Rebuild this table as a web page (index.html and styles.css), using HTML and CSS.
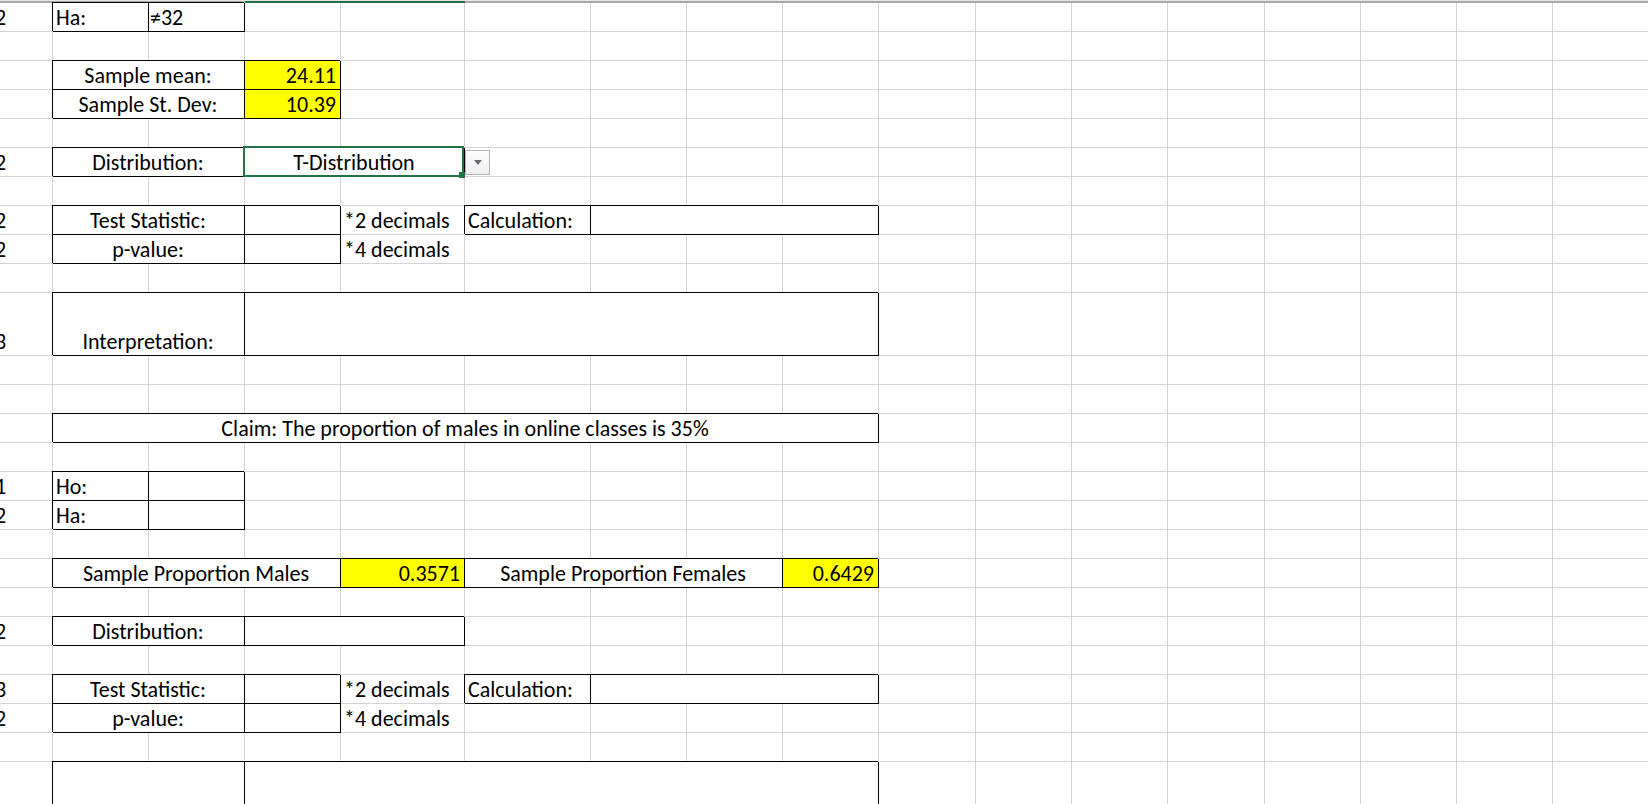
FILE: index.html
```html
<!DOCTYPE html>
<html>
<head>
<meta charset="utf-8">
<link rel="stylesheet" href="styles.css">
</head>
<body>
<div class="sheet">
  <div class="colhead"><div class="hd-sel"></div></div>

  <div class="row">
    <div class="cell ca">2</div>
    <div class="cell cb bd">Ha:</div>
    <div class="cell cc bd neq">≠32</div>
  </div>
  <div class="row"></div>
  <div class="row">
    <div class="cell s-bc bd center">Sample mean:</div>
    <div class="cell cd bd yel right">24.11</div>
  </div>
  <div class="row">
    <div class="cell s-bc bd center">Sample St. Dev:</div>
    <div class="cell cd bd yel right">10.39</div>
  </div>
  <div class="row"></div>
  <div class="row">
    <div class="cell ca">2</div>
    <div class="cell s-bc bd center">Distribution:</div>
    <div class="cell s-de bd center sel">T-Distribution</div>
    <div class="cell cf dd-cell"><span class="dd"><span class="arrow"></span></span></div>
  </div>
  <div class="row"></div>
  <div class="row">
    <div class="cell ca">2</div>
    <div class="cell s-bc bd center">Test Statistic:</div>
    <div class="cell cd bd"></div>
    <div class="cell ce">*2 decimals</div>
    <div class="cell cf bd">Calculation:</div>
    <div class="cell s-gi bd"></div>
  </div>
  <div class="row">
    <div class="cell ca">2</div>
    <div class="cell s-bc bd center">p-value:</div>
    <div class="cell cd bd"></div>
    <div class="cell ce">*4 decimals</div>
  </div>
  <div class="row"></div>
  <div class="row tall">
    <div class="cell ca">3</div>
    <div class="cell s-bc bd center">Interpretation:</div>
    <div class="cell s-di bd"></div>
  </div>
  <div class="row"></div>
  <div class="row"></div>
  <div class="row">
    <div class="cell s-bi bd center">Claim: The proportion of males in online classes is 35%</div>
  </div>
  <div class="row"></div>
  <div class="row">
    <div class="cell ca">1</div>
    <div class="cell cb bd">Ho:</div>
    <div class="cell cc bd"></div>
  </div>
  <div class="row">
    <div class="cell ca">2</div>
    <div class="cell cb bd">Ha:</div>
    <div class="cell cc bd"></div>
  </div>
  <div class="row"></div>
  <div class="row">
    <div class="cell s-bd bd center">Sample Proportion Males</div>
    <div class="cell ce bd yel right">0.3571</div>
    <div class="cell s-fh bd center">Sample Proportion Females</div>
    <div class="cell ci bd yel right">0.6429</div>
  </div>
  <div class="row"></div>
  <div class="row">
    <div class="cell ca">2</div>
    <div class="cell s-bc bd center">Distribution:</div>
    <div class="cell s-de bd"></div>
  </div>
  <div class="row"></div>
  <div class="row">
    <div class="cell ca">3</div>
    <div class="cell s-bc bd center">Test Statistic:</div>
    <div class="cell cd bd"></div>
    <div class="cell ce">*2 decimals</div>
    <div class="cell cf bd">Calculation:</div>
    <div class="cell s-gi bd"></div>
  </div>
  <div class="row">
    <div class="cell ca">2</div>
    <div class="cell s-bc bd center">p-value:</div>
    <div class="cell cd bd"></div>
    <div class="cell ce">*4 decimals</div>
  </div>
  <div class="row"></div>
  <div class="row tall">
    <div class="cell s-bc bd"></div>
    <div class="cell s-di bd"></div>
  </div>
</div>
</body>
</html>
```

FILE: styles.css
```css
* { box-sizing: border-box; }

html, body {
  margin: 0;
  padding: 0;
  background: #ffffff;
}

body {
  width: 1648px;
  height: 804px;
  overflow: hidden;
  font-family: "Carlito", "Lato", "Liberation Sans", sans-serif;
  font-size: 22px;
  color: #000000;
}

.sheet {
  width: 1648px;
}

.colhead,
.row {
  display: grid;
  grid-template-columns: 53px 96px 96px 96px 124px 126px 96px 96px 96px 97px 96px 96px 97px 96px 96px 96px 96px;
}

.colhead {
  height: 3px;
  background: linear-gradient(#e4e4e4 0 1px, #a9a9a9 1px 3px);
}

.hd-sel {
  grid-column: 4 / 6;
  margin-top: 1px;
  background: #217346;
}

.row {
  height: 29px;
  background:
    linear-gradient(#d4d4d4, #d4d4d4) 0 100% / 100% 1px no-repeat,
    linear-gradient(#d4d4d4, #d4d4d4) 52px 0 / 1px 100% no-repeat,
    linear-gradient(#d4d4d4, #d4d4d4) 148px 0 / 1px 100% no-repeat,
    linear-gradient(#d4d4d4, #d4d4d4) 244px 0 / 1px 100% no-repeat,
    linear-gradient(#d4d4d4, #d4d4d4) 340px 0 / 1px 100% no-repeat,
    linear-gradient(#d4d4d4, #d4d4d4) 464px 0 / 1px 100% no-repeat,
    linear-gradient(#d4d4d4, #d4d4d4) 590px 0 / 1px 100% no-repeat,
    linear-gradient(#d4d4d4, #d4d4d4) 686px 0 / 1px 100% no-repeat,
    linear-gradient(#d4d4d4, #d4d4d4) 782px 0 / 1px 100% no-repeat,
    linear-gradient(#d4d4d4, #d4d4d4) 878px 0 / 1px 100% no-repeat,
    linear-gradient(#d4d4d4, #d4d4d4) 975px 0 / 1px 100% no-repeat,
    linear-gradient(#d4d4d4, #d4d4d4) 1071px 0 / 1px 100% no-repeat,
    linear-gradient(#d4d4d4, #d4d4d4) 1167px 0 / 1px 100% no-repeat,
    linear-gradient(#d4d4d4, #d4d4d4) 1264px 0 / 1px 100% no-repeat,
    linear-gradient(#d4d4d4, #d4d4d4) 1360px 0 / 1px 100% no-repeat,
    linear-gradient(#d4d4d4, #d4d4d4) 1456px 0 / 1px 100% no-repeat,
    linear-gradient(#d4d4d4, #d4d4d4) 1552px 0 / 1px 100% no-repeat;
}

.row.tall {
  height: 63px;
}

.cell {
  display: flex;
  align-items: flex-end;
  justify-content: flex-start;
  padding: 0 4px 3px 3px;
  line-height: 20px;
  white-space: nowrap;
  overflow: visible;
  border-right: 1px solid transparent;
  border-bottom: 1px solid transparent;
}

.center { justify-content: center; }
.right { justify-content: flex-end; }

.bd {
  background: #ffffff;
  border-right-color: #000000;
  border-bottom-color: #000000;
  box-shadow: -1px -1px 0 0 #000000;
}

.yel { background: #ffff00; }

.ca { grid-column: 1; padding-left: 0; text-indent: -5px; }
.cb { grid-column: 2; }
.cc { grid-column: 3; }
.cd { grid-column: 4; }
.ce { grid-column: 5; }
.cf { grid-column: 6; }
.ci { grid-column: 9; }

.s-bc { grid-column: 2 / 4; }
.s-bd { grid-column: 2 / 5; }
.s-de { grid-column: 4 / 6; }
.s-fh { grid-column: 6 / 9; }
.s-gi { grid-column: 7 / 10; }
.s-di { grid-column: 4 / 10; }
.s-bi { grid-column: 2 / 10; }

.neq { padding-left: 1px; }

/* selected cell */
.sel { position: relative; }
.sel::after {
  content: "";
  position: absolute;
  left: -2px;
  top: -2px;
  right: 0;
  bottom: -1px;
  border: 2px solid #217346;
  pointer-events: none;
}
.sel::before {
  content: "";
  position: absolute;
  right: -1px;
  bottom: -2px;
  width: 6px;
  height: 6px;
  background: #217346;
  z-index: 1;
}

/* data validation dropdown button */
.dd-cell {
  align-items: flex-start;
  padding: 2px 0 0 0;
}
.dd {
  width: 25px;
  height: 25px;
  border: 1px solid #adb2b9;
  background: linear-gradient(#fdfdfd, #eceef1);
  display: flex;
  align-items: center;
  justify-content: center;
}
.arrow {
  width: 0;
  height: 0;
  border-left: 4.5px solid transparent;
  border-right: 4.5px solid transparent;
  border-top: 5px solid #6a6a6a;
}
```
